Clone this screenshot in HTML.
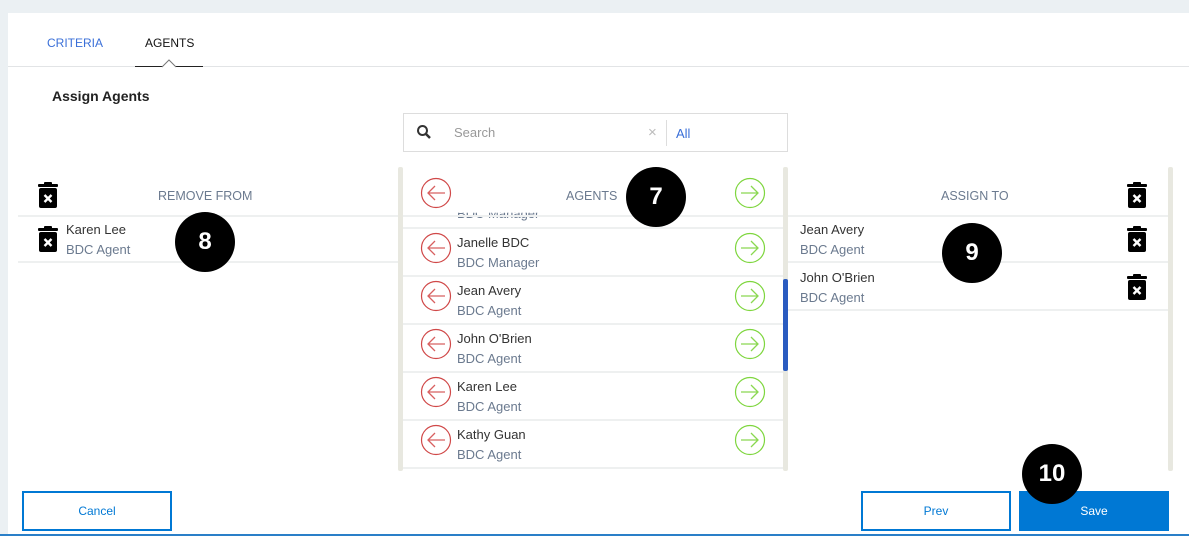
<!DOCTYPE html>
<html><head><meta charset="utf-8"><style>
*{box-sizing:border-box;margin:0;padding:0}
body{width:1189px;height:536px;background:#ebf0f3;font-family:"Liberation Sans",sans-serif;position:relative;overflow:hidden}
.a{position:absolute}
.card{left:8px;top:13px;width:1181px;height:521px;background:#fff}
.t{font-size:13px;color:#333;white-space:nowrap}
.s{color:#6b7a8f}
.hl{height:2px;background:#eef0f0}
.bar{width:5px;background:#e8e8e0;border-radius:2px}
.circ{width:60px;height:60px;border-radius:50%;background:#000;color:#fff;font-weight:bold;font-size:24px;text-align:center;line-height:60px}
.btn{height:40px;border:2px solid #0078d4;color:#0078d4;font-size:12px;text-align:center;line-height:36px;background:#fff}
</style></head><body>
<div class="a card"></div>
<div class="a t" style="left:47px;top:36px;font-size:12px;color:#3a6fd8">CRITERIA</div>
<div class="a t" style="left:145px;top:36px;font-size:12px;color:#111">AGENTS</div>
<div class="a" style="left:8px;top:66px;width:1181px;height:1px;background:#e2e4e6"></div>
<div class="a" style="left:135px;top:66px;width:68px;height:1px;background:#222"></div>
<svg class="a" style="left:160px;top:58px" width="18" height="10"><path d="M2 9 L9 2 L16 9" fill="#fff" stroke="#777" stroke-width="1"/></svg>
<div class="a t" style="left:52px;top:88px;font-size:14px;font-weight:bold;color:#222">Assign Agents</div>
<div class="a" style="left:403px;top:113px;width:385px;height:39px;border:1px solid #ddd"></div>
<svg class="a" style="left:416px;top:124px" width="16" height="16"><circle cx="6.5" cy="6.5" r="4.5" fill="none" stroke="#333" stroke-width="2"/><path d="M10 10 L14 14" stroke="#333" stroke-width="2.5"/></svg>
<div class="a t" style="left:454px;top:125px;color:#999">Search</div>
<div class="a t" style="left:648px;top:124px;color:#bbb;font-size:15px">×</div>
<div class="a" style="left:666px;top:120px;width:1px;height:26px;background:#ddd"></div>
<div class="a t" style="left:676px;top:126px;color:#3a6fd8">All</div>

<div class="a bar" style="left:398px;top:167px;height:304px"></div>
<div class="a bar" style="left:783px;top:167px;height:304px"></div>
<div class="a" style="left:783px;top:279px;width:5px;height:92px;background:#2a5bc0;border-radius:2px"></div>
<div class="a bar" style="left:1168px;top:167px;height:304px"></div>

<div class="a t s" style="left:158px;top:189px;font-size:12.5px">REMOVE FROM</div>
<div class="a hl" style="left:18px;top:215px;width:380px"></div>
<div class="a hl" style="left:18px;top:261px;width:380px"></div>
<div class="a t" style="left:66px;top:222px">Karen Lee</div>
<div class="a t s" style="left:66px;top:242px">BDC Agent</div>

<div class="a t s" style="left:457px;top:206px;clip-path:inset(45% 0 0 0)">BDC Manager</div>
<div class="a t s" style="left:566px;top:189px;font-size:12.5px">AGENTS</div>
<div class="a hl" style="left:403px;top:215px;width:380px"></div>
<div class="a hl" style="left:403px;top:227px;width:380px"></div>
<div class="a hl" style="left:403px;top:275px;width:380px"></div>
<div class="a hl" style="left:403px;top:323px;width:380px"></div>
<div class="a hl" style="left:403px;top:371px;width:380px"></div>
<div class="a hl" style="left:403px;top:419px;width:380px"></div>
<div class="a hl" style="left:403px;top:467px;width:380px"></div>
<div class="a t" style="left:457px;top:235px">Janelle BDC</div><div class="a t s" style="left:457px;top:255px">BDC Manager</div>
<div class="a t" style="left:457px;top:283px">Jean Avery</div><div class="a t s" style="left:457px;top:303px">BDC Agent</div>
<div class="a t" style="left:457px;top:331px">John O'Brien</div><div class="a t s" style="left:457px;top:351px">BDC Agent</div>
<div class="a t" style="left:457px;top:379px">Karen Lee</div><div class="a t s" style="left:457px;top:399px">BDC Agent</div>
<div class="a t" style="left:457px;top:427px">Kathy Guan</div><div class="a t s" style="left:457px;top:447px">BDC Agent</div>

<svg class="a" style="left:0;top:0" width="1189" height="536">
<defs>
<g id="l"><circle r="14.5" fill="none" stroke="#d04848" stroke-width="1.2"/><path d="M9 0 H-8 M-1 -7 L-8 0 L-1 7" fill="none" stroke="#d86060" stroke-width="1.3"/></g>
<g id="r"><circle r="14.5" fill="none" stroke="#7ed63e" stroke-width="1.2"/><path d="M-9 0 H8 M1 -7 L8 0 L1 7" fill="none" stroke="#8ad850" stroke-width="1.3"/></g>
<g id="tr"><rect x="-10" y="-11" width="20" height="3" rx="1" fill="#000"/><rect x="-4" y="-13" width="8" height="3" rx="1" fill="#000"/><rect x="-9" y="-7" width="18" height="20" rx="2" fill="#000"/><path d="M-3.5 0 L3.5 7 M3.5 0 L-3.5 7" stroke="#fff" stroke-width="2.4"/></g>
</defs>
<use href="#l" x="436" y="193"/><use href="#r" x="750" y="193"/>
<use href="#l" x="436" y="248"/><use href="#r" x="750" y="248"/>
<use href="#l" x="436" y="296"/><use href="#r" x="750" y="296"/>
<use href="#l" x="436" y="344"/><use href="#r" x="750" y="344"/>
<use href="#l" x="436" y="392"/><use href="#r" x="750" y="392"/>
<use href="#l" x="436" y="440"/><use href="#r" x="750" y="440"/>
<use href="#tr" x="48" y="195"/><use href="#tr" x="48" y="239"/>
<use href="#tr" x="1137" y="195"/><use href="#tr" x="1137" y="239"/><use href="#tr" x="1137" y="287"/>
</svg>

<div class="a t s" style="left:941px;top:189px;font-size:12.5px">ASSIGN TO</div>
<div class="a hl" style="left:788px;top:215px;width:380px"></div>
<div class="a hl" style="left:788px;top:261px;width:380px"></div>
<div class="a hl" style="left:788px;top:309px;width:380px"></div>
<div class="a t" style="left:800px;top:222px">Jean Avery</div><div class="a t s" style="left:800px;top:242px">BDC Agent</div>
<div class="a t" style="left:800px;top:270px">John O'Brien</div><div class="a t s" style="left:800px;top:290px">BDC Agent</div>

<div class="a btn" style="left:22px;top:491px;width:150px">Cancel</div>
<div class="a btn" style="left:861px;top:491px;width:150px">Prev</div>
<div class="a btn" style="left:1019px;top:491px;width:150px;background:#0078d4;color:#fff">Save</div>
<div class="a" style="left:0;top:534px;width:1189px;height:2px;background:#2a7fc8"></div>

<div class="a circ" style="left:626px;top:167px">7</div>
<div class="a circ" style="left:175px;top:212px">8</div>
<div class="a circ" style="left:942px;top:223px">9</div>
<div class="a circ" style="left:1022px;top:444px">10</div>
</body></html>
